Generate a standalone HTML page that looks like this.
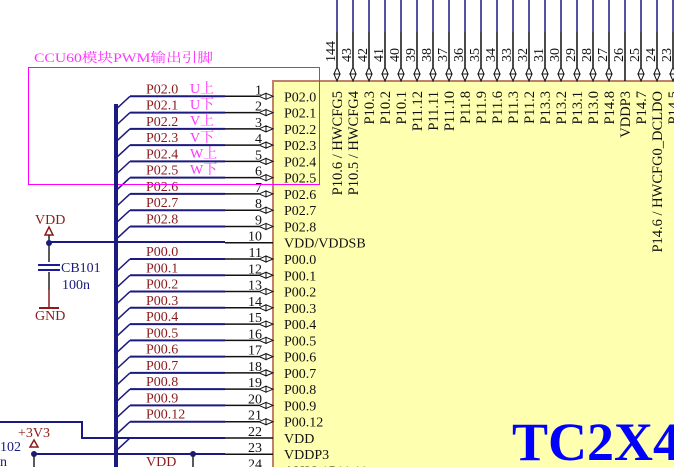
<!DOCTYPE html>
<html><head><meta charset="utf-8"><style>
html,body{margin:0;padding:0;background:#fff;overflow:hidden}
svg{display:block}
text{font-family:"Liberation Serif","Noto Serif CJK SC",serif}
</style></head><body>
<svg width="674" height="467" viewBox="0 0 674 467" xmlns="http://www.w3.org/2000/svg">
<rect x="273" y="81" width="420" height="400" fill="#ffffb0" stroke="#c08070" stroke-width="2"/>
<text x="512" y="460" font-size="54" font-weight="bold" fill="#0000ff">TC2X4</text>
<g id="top"></g>
<g id="left"></g>
<rect x="28.5" y="67.5" width="291" height="117" fill="none" stroke="#ff00ff" stroke-width="1"/>
<text x="34" y="62" font-size="13" fill="#ff33ff" textLength="179" lengthAdjust="spacingAndGlyphs">CCU60模块PWM输出引脚</text>
<g font-size="14" fill="#ff33ff">
<text x="190" y="93">U上</text><text x="190" y="109">U下</text>
<text x="190" y="125">V上</text><text x="190" y="142">V下</text>
<text x="190" y="158">W上</text><text x="190" y="174">W下</text>
</g>
<line x1="116" y1="104" x2="116" y2="467" stroke="#1a1a80" stroke-width="4"/>
<text x="35" y="224" font-size="14" fill="#8b1a1a">VDD</text>
<path d="M45,235 L49,227 L53,235 Z" fill="none" stroke="#8b1a1a" stroke-width="1.5"/>
<line x1="49" y1="235" x2="49" y2="262" stroke="#222" stroke-width="1.5"/>
<line x1="49" y1="272" x2="49" y2="290" stroke="#222" stroke-width="1.5"/>
<line x1="49" y1="290" x2="49" y2="308" stroke="#8b1a1a" stroke-width="1.5"/>
<line x1="38" y1="265" x2="60" y2="265" stroke="#1a1aa0" stroke-width="2"/>
<line x1="38" y1="270" x2="60" y2="270" stroke="#1a1aa0" stroke-width="2"/>
<line x1="39" y1="308" x2="59" y2="308" stroke="#8b1a1a" stroke-width="2"/>
<text x="61" y="272" font-size="14" fill="#1a1a80">CB101</text>
<text x="62" y="289" font-size="14" fill="#1a1a80">100n</text>
<text x="35" y="320" font-size="14" fill="#8b1a1a">GND</text>
<line x1="49" y1="242" x2="225" y2="242" stroke="#1a1a80" stroke-width="2"/>
<circle cx="49" cy="243" r="3" fill="#1a1a80"/>
<path d="M0,422 L82,422 L82,438 L225,438" fill="none" stroke="#1a1a80" stroke-width="2"/>
<line x1="34" y1="454" x2="225" y2="454" stroke="#1a1a80" stroke-width="2"/>
<circle cx="34" cy="454" r="3" fill="#1a1a80"/><circle cx="193" cy="454" r="3" fill="#1a1a80"/>
<line x1="34" y1="454" x2="34" y2="467" stroke="#222" stroke-width="1.5"/>
<line x1="193" y1="454" x2="193" y2="467" stroke="#222" stroke-width="1.5"/>
<text x="18" y="437" font-size="14" fill="#8b1a1a">+3V3</text>
<path d="M30,447 L34,440 L38,447 Z" fill="none" stroke="#8b1a1a" stroke-width="1.5"/>
<text x="0" y="451" font-size="14" fill="#1a1a80">102</text>
<text x="-7" y="466" font-size="14" fill="#1a1a80">0n</text>
<text x="146" y="466" font-size="14" fill="#8b1a1a">VDD</text>
</svg>
<script>
var NS="http://www.w3.org/2000/svg";
function el(p,t,a,txt){var e=document.createElementNS(NS,t);for(var k in a)e.setAttribute(k,a[k]);if(txt!=null)e.textContent=txt;p.appendChild(e);return e;}
var L=document.getElementById('left'),T=document.getElementById('top');
var nets=["P02.0","P02.1","P02.2","P02.3","P02.4","P02.5","P02.6","P02.7","P02.8",null,"P00.0","P00.1","P00.2","P00.3","P00.4","P00.5","P00.6","P00.7","P00.8","P00.9","P00.12",null,null,null];
var names=["P02.0","P02.1","P02.2","P02.3","P02.4","P02.5","P02.6","P02.7","P02.8","VDD/VDDSB","P00.0","P00.1","P00.2","P00.3","P00.4","P00.5","P00.6","P00.7","P00.8","P00.9","P00.12","VDD","VDDP3","AN23 / P11.11"];
for(var i=0;i<24;i++){
 var y=96.3+i*16.27;
 var arrow=(i!=9&&i<21);
 el(L,'line',{x1:225,y1:y,x2:arrow?259:273,y2:y,stroke:'#111','stroke-width':1.5});
 if(nets[i]){
  el(L,'line',{x1:130,y1:y,x2:225,y2:y,stroke:'#1a1a80','stroke-width':2});
  el(L,'line',{x1:117,y1:y+12,x2:130,y2:y,stroke:'#1a1a80','stroke-width':1.5});
  el(L,'text',{x:146,y:y-3,'font-size':14,fill:'#8b1a1a'},nets[i]);
 }
 if(i==21) el(L,'line',{x1:117,y1:y+12,x2:130,y2:y,stroke:'#1a1a80','stroke-width':1.5});
 if(arrow){
  el(L,'path',{d:'M259,'+y+' L266,'+(y-3)+' L266,'+(y+3)+' Z M266,'+(y-3)+' L273,'+y+' L266,'+(y+3)+' Z',fill:'#fff',stroke:'#111','stroke-width':1});
 }
 el(L,'text',{x:262,y:y-2,'font-size':14,fill:'#111','text-anchor':'end'},String(i+1));
 el(L,'text',{x:284,y:y+5,'font-size':14,fill:'#111'},names[i]);
}
var tn=["P10.6 / HWCFG5","P10.5 / HWCFG4","P10.3","P10.2","P10.1","P11.12","P11.11","P11.10","P11.8","P11.9","P11.6","P11.3","P11.2","P13.3","P13.2","P13.1","P13.0","P14.8","VDDP3","P14.7","P14.6 / HWCFG0_DCLDO","P14.5"];
for(var k=0;k<22;k++){
 var x=337+k*16;
 el(T,'line',{x1:x,y1:0,x2:x,y2:32,stroke:'#1a1a80','stroke-width':1.5});
 el(T,'line',{x1:x,y1:32,x2:x,y2:k==18?81:67,stroke:'#111','stroke-width':1.5});
 if(k!=18){
  el(T,'path',{d:'M'+x+',67 L'+(x-3)+',74 L'+(x+3)+',74 Z M'+(x-3)+',74 L'+x+',81 L'+(x+3)+',74 Z',fill:'#fff',stroke:'#111','stroke-width':1});
 }
 var num=k==0?"144":String(144-k).slice(1);
 el(T,'text',{transform:'translate('+(x-2)+',62) rotate(-90)','font-size':14,fill:'#111'},num);
 el(T,'text',{transform:'translate('+(x+5)+',91) rotate(-90)','font-size':14.5,fill:'#111','text-anchor':'end'},tn[k]);
}
</script>
</body></html>
